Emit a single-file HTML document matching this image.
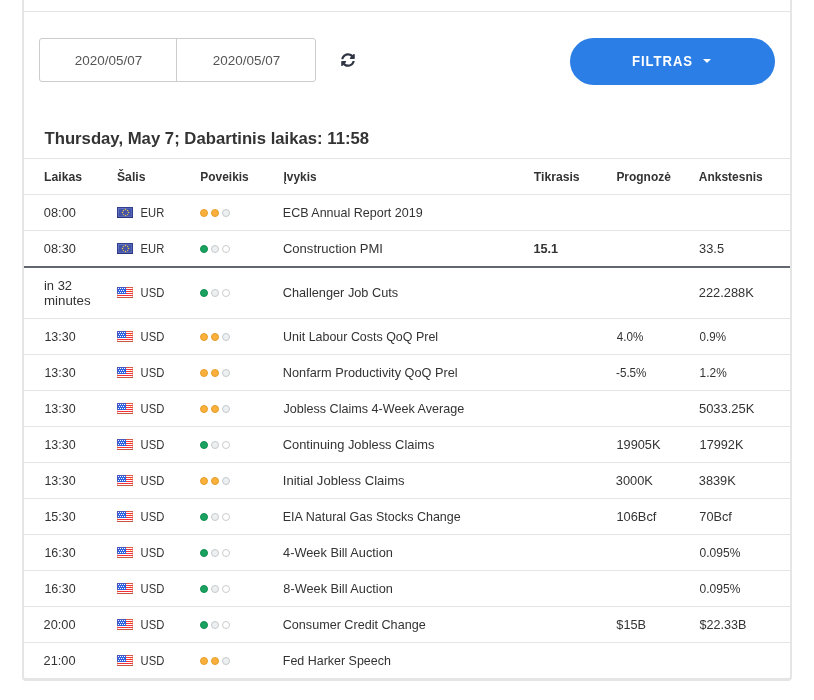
<!DOCTYPE html>
<html lang="lt">
<head>
<meta charset="utf-8">
<title>Ekonomikos kalendorius</title>
<style>
*{box-sizing:border-box;margin:0;padding:0}
html,body{width:814px;height:700px;overflow:hidden;background:#fff}
body{font-family:"Liberation Sans",sans-serif;font-size:13px;color:#333;position:relative}
#wrap{position:absolute;left:0;top:0;width:814px;height:700px;will-change:transform;opacity:.999}
.card{position:absolute;left:22px;top:-20px;width:770px;height:701px;border:2px solid #e5e5e5;border-bottom-width:3px;border-radius:0 0 4px 4px;background:#fff}
.topline{position:absolute;left:24px;top:11px;width:766px;height:1px;background:#e4e4e4}
.dates{position:absolute;left:39px;top:38px;width:277px;height:44px;border:1px solid #ccc;border-radius:3px;display:flex}
.dates div{flex:0 0 auto;height:42px;line-height:43px;text-align:center;font-size:13px;color:#555}
.dates em{font-style:normal;display:inline-block}
.dates .d1{width:137px;border-right:1px solid #ccc}
.dates .d2{width:138px}
.refresh{position:absolute;left:341px;top:53px;width:14px;height:14px}
.btn{position:absolute;left:570px;top:38px;width:205px;height:47px;border-radius:24px;background:#2a7ee6;color:#fff;font-weight:700;font-size:14px;letter-spacing:1px}
.btn span{transform-origin:0 50%;position:absolute;left:63px;top:15px;line-height:16px;white-space:nowrap}
.btn i{position:absolute;left:132.8px;top:21px;width:0;height:0;border-left:4.2px solid transparent;border-right:4.2px solid transparent;border-top:4.4px solid #fff}
h2{transform-origin:0 50%;position:absolute;left:44px;top:128px;font-size:17px;line-height:22px;font-weight:700;color:#333;white-space:nowrap}
.tbl{position:absolute;left:24px;top:158px;width:766px}
.r{position:relative;height:36px;border-top:1px solid #e4e4e4}
.r.now{height:52px;border-top:2px solid #63676e}
.r span{position:absolute;top:10px;line-height:15px;white-space:nowrap;transform-origin:0 50%}
.r.now .l1{top:10px}.r.now .l2{top:25px}
.r.h span{font-weight:700}
.c1{left:20px}.c2{left:93px}.c3{left:176px}.c4{left:259px}.c5{left:509px}.c6{left:592px}.c7{left:675px}
.r .cc{left:116px}
.r .fl{left:93px;top:12px;width:16px;height:11px;line-height:0}
.r.now .fl{top:19px}
.r.now .cc,.r.now .c4,.r.now .c7{top:17px}
.r .dots{left:176px;top:14px;height:8px;line-height:0;display:flex}
.r.now .dots{top:21px}
.dots b{display:block;width:8px;height:8px;border-radius:50%;margin-right:3px;border:1px solid #ccc;background:#fff}
.dots b.o{background:#fbb03b;border-color:#e39e2b}
.dots b.g{background:#1aa260;border-color:#128c50}
.dots b.e{background:#ecf0f1;border-color:#c6cacd}
.bold{font-weight:700}
</style>
</head>
<body>
<div id="wrap">
<div class="card"></div>
<div class="topline"></div>

<div class="dates"><div class="d1"><em style="transform:translateX(0.99px) scaleX(1.0356)">2020/05/07</em></div><div class="d2"><em style="transform:translateX(0.99px) scaleX(1.0356)">2020/05/07</em></div></div>
<svg class="refresh" viewBox="0 0 512 512"><path fill="#2f3542" d="M370.72 133.28C339.458 104.008 298.888 87.962 255.848 88c-77.458.068-144.328 53.178-162.791 126.85-1.344 5.363-6.122 9.15-11.651 9.15H24.103c-7.498 0-13.194-6.807-11.807-14.176C33.933 94.924 134.813 8 256 8c66.448 0 126.791 26.136 171.315 68.685L463.03 40.97C478.149 25.851 504 36.559 504 57.941V192c0 13.255-10.745 24-24 24H345.941c-21.382 0-32.09-25.851-16.971-40.971l41.75-41.749zM32 296h134.059c21.382 0 32.09 25.851 16.971 40.971l-41.75 41.75c31.262 29.273 71.835 45.319 114.876 45.28 77.418-.07 144.315-53.144 162.787-126.849 1.344-5.363 6.122-9.15 11.651-9.15h57.304c7.498 0 13.194 6.807 11.807 14.176C478.067 417.076 377.187 504 256 504c-66.448 0-126.791-26.136-171.315-68.685L48.97 471.03C33.851 486.149 8 475.441 8 454.059V320c0-13.255 10.745-24 24-24z"/></svg>
<div class="btn"><span style="transform:translateX(-0.92px) scaleX(0.9362)">FILTRAS</span><i></i></div>

<h2 style="transform:translateX(0.47px) scaleX(0.9827)">Thursday, May 7; Dabartinis laikas: 11:58</h2>

<svg width="0" height="0" style="position:absolute">
<defs>
<g id="eu" shape-rendering="crispEdges">
<rect width="16" height="11" fill="#323e8e"/>
<rect x="1" y="1" width="14" height="9" fill="#5567b8"/>
<rect x="1" y="1" width="7" height="1" fill="#6176c6"/><rect x="1" y="1" width="1" height="5" fill="#6176c6"/>
<rect x="2" y="2" width="12" height="7" fill="#4253a8"/>
<rect x="0" y="10" width="16" height="1" fill="#2a357e"/>
<g fill="#ecc94b" shape-rendering="auto">
<circle cx="8.5" cy="2.6" r=".75"/><circle cx="8.5" cy="8.5" r=".75"/>
<circle cx="5.5" cy="5.5" r=".75"/><circle cx="11.5" cy="5.5" r=".75"/>
<circle cx="6.4" cy="3.5" r=".65"/><circle cx="10.6" cy="3.5" r=".65"/>
<circle cx="6.4" cy="7.6" r=".65"/><circle cx="10.6" cy="7.6" r=".65"/>
</g>
</g>
<g id="us" shape-rendering="crispEdges">
<rect width="16" height="11" fill="#fff"/>
<rect x="9" y="0" width="7" height="1" fill="#d95a44"/>
<rect x="15" y="1" width="1" height="9" fill="#eeb3a6"/>
<g fill="#f5313c">
<rect x="9" y="2" width="6" height="1"/><rect x="9" y="4" width="6" height="1"/><rect x="9" y="6" width="6" height="1"/><rect x="1" y="8" width="14" height="1"/>
</g>
<g fill="#d8583f">
<rect x="15" y="2" width="1" height="1"/><rect x="15" y="4" width="1" height="1"/><rect x="15" y="6" width="1" height="1"/><rect x="15" y="8" width="1" height="1"/><rect x="0" y="8" width="1" height="1"/>
</g>
<rect x="0" y="7" width="1" height="1" fill="#f3c3b7"/><rect x="0" y="9" width="1" height="1" fill="#f3c3b7"/>
<rect x="0" y="10" width="16" height="1" fill="#c9543f"/>
<rect x="0" y="0" width="9" height="7" fill="#2d63e0"/>
<rect x="0" y="0" width="1" height="7" fill="#4b57ba"/><rect x="0" y="0" width="9" height="1" fill="#4b57ba"/>
<g fill="#fff">
<rect x="1" y="1" width="1" height="1"/><rect x="3" y="1" width="1" height="1"/><rect x="5" y="1" width="1" height="1"/><rect x="7" y="1" width="1" height="1"/>
<rect x="2" y="3" width="1" height="1"/><rect x="4" y="3" width="1" height="1"/><rect x="6" y="3" width="1" height="1"/>
<rect x="1" y="5" width="1" height="1"/><rect x="3" y="5" width="1" height="1"/><rect x="5" y="5" width="1" height="1"/><rect x="7" y="5" width="1" height="1"/>
</g>
<rect x="13" y="3" width="1" height="1" fill="#f6e04a"/>
</g>
</defs>
</svg>

<div class="tbl">
<div class="r h"><span class="c1" style="transform:translateX(0.01px) scaleX(0.9395)">Laikas</span><span class="c2" style="transform:translateX(-0.05px) scaleX(0.9397)">Šalis</span><span class="c3" style="transform:translateX(0.33px) scaleX(0.9171)">Poveikis</span><span class="c4" style="transform:translateX(0.52px) scaleX(0.9137)">Įvykis</span><span class="c5" style="transform:translateX(0.77px) scaleX(0.9381)">Tikrasis</span><span class="c6" style="transform:translateX(0.38px) scaleX(0.9186)">Prognozė</span><span class="c7" style="transform:translateX(-0.14px) scaleX(0.9205)">Ankstesnis</span></div>
<div class="r"><span class="c1" style="transform:translateX(-0.16px) scaleX(0.9846)">08:00</span><span class="fl"><svg width="16" height="11"><use href="#eu"/></svg></span><span class="cc" style="transform:translateX(0.59px) scaleX(0.8612)">EUR</span><span class="dots"><b class="o"></b><b class="o"></b><b class="e"></b></span><span class="c4" style="transform:translateX(-0.22px) scaleX(0.9628)">ECB Annual Report 2019</span></div>
<div class="r"><span class="c1" style="transform:translateX(-0.16px) scaleX(0.9846)">08:30</span><span class="fl"><svg width="16" height="11"><use href="#eu"/></svg></span><span class="cc" style="transform:translateX(0.59px) scaleX(0.8612)">EUR</span><span class="dots"><b class="g"></b><b class="e"></b><b></b></span><span class="c4" style="transform:translateX(-0.08px) scaleX(1.0036)">Construction PMI</span><span class="c5 bold" style="transform:translateX(0.41px) scaleX(0.9778)">15.1</span><span class="c7" style="transform:translateX(0.08px) scaleX(0.9867)">33.5</span></div>
<div class="r now"><span class="c1 l1" style="transform:translateX(-0.01px) scaleX(0.9942)">in 32</span><span class="c1 l2" style="transform:translateX(0.01px) scaleX(1.0234)">minutes</span><span class="fl"><svg width="16" height="11"><use href="#us"/></svg></span><span class="cc" style="transform:translateX(0.58px) scaleX(0.8631)">USD</span><span class="dots"><b class="g"></b><b class="e"></b><b></b></span><span class="c4" style="transform:translateX(-0.28px) scaleX(0.9803)">Challenger Job Cuts</span><span class="c7" style="transform:translateX(-0.26px) scaleX(0.9895)">222.288K</span></div>
<div class="r"><span class="c1" style="transform:translateX(0.42px) scaleX(0.9597)">13:30</span><span class="fl"><svg width="16" height="11"><use href="#us"/></svg></span><span class="cc" style="transform:translateX(0.58px) scaleX(0.8631)">USD</span><span class="dots"><b class="o"></b><b class="o"></b><b class="e"></b></span><span class="c4" style="transform:translateX(0.03px) scaleX(0.9580)">Unit Labour Costs QoQ Prel</span><span class="c6" style="transform:translateX(0.73px) scaleX(0.8967)">4.0%</span><span class="c7" style="transform:translateX(0.57px) scaleX(0.8920)">0.9%</span></div>
<div class="r"><span class="c1" style="transform:translateX(0.42px) scaleX(0.9597)">13:30</span><span class="fl"><svg width="16" height="11"><use href="#us"/></svg></span><span class="cc" style="transform:translateX(0.58px) scaleX(0.8631)">USD</span><span class="dots"><b class="o"></b><b class="o"></b><b class="e"></b></span><span class="c4" style="transform:translateX(-0.16px) scaleX(0.9796)">Nonfarm Productivity QoQ Prel</span><span class="c6" style="transform:translateX(0.01px) scaleX(0.8974)">-5.5%</span><span class="c7" style="transform:translateX(0.62px) scaleX(0.9148)">1.2%</span></div>
<div class="r"><span class="c1" style="transform:translateX(0.42px) scaleX(0.9597)">13:30</span><span class="fl"><svg width="16" height="11"><use href="#us"/></svg></span><span class="cc" style="transform:translateX(0.58px) scaleX(0.8631)">USD</span><span class="dots"><b class="o"></b><b class="o"></b><b class="e"></b></span><span class="c4" style="transform:translateX(0.38px) scaleX(0.9688)">Jobless Claims 4-Week Average</span><span class="c7" style="transform:translateX(-0.08px) scaleX(0.9968)">5033.25K</span></div>
<div class="r"><span class="c1" style="transform:translateX(0.42px) scaleX(0.9597)">13:30</span><span class="fl"><svg width="16" height="11"><use href="#us"/></svg></span><span class="cc" style="transform:translateX(0.58px) scaleX(0.8631)">USD</span><span class="dots"><b class="g"></b><b class="e"></b><b></b></span><span class="c4" style="transform:translateX(-0.28px) scaleX(0.9907)">Continuing Jobless Claims</span><span class="c6" style="transform:translateX(0.44px) scaleX(0.9812)">19905K</span><span class="c7" style="transform:translateX(0.56px) scaleX(0.9780)">17992K</span></div>
<div class="r"><span class="c1" style="transform:translateX(0.42px) scaleX(0.9597)">13:30</span><span class="fl"><svg width="16" height="11"><use href="#us"/></svg></span><span class="cc" style="transform:translateX(0.58px) scaleX(0.8631)">USD</span><span class="dots"><b class="o"></b><b class="o"></b><b class="e"></b></span><span class="c4" style="transform:translateX(-0.21px) scaleX(1.0035)">Initial Jobless Claims</span><span class="c6" style="transform:translateX(-0.21px) scaleX(0.9874)">3000K</span><span class="c7" style="transform:translateX(-0.19px) scaleX(0.9820)">3839K</span></div>
<div class="r"><span class="c1" style="transform:translateX(0.42px) scaleX(0.9597)">15:30</span><span class="fl"><svg width="16" height="11"><use href="#us"/></svg></span><span class="cc" style="transform:translateX(0.58px) scaleX(0.8631)">USD</span><span class="dots"><b class="g"></b><b class="e"></b><b></b></span><span class="c4" style="transform:translateX(-0.22px) scaleX(0.9620)">EIA Natural Gas Stocks Change</span><span class="c6" style="transform:translateX(0.43px) scaleX(0.9881)">106Bcf</span><span class="c7" style="transform:translateX(0.31px) scaleX(0.9781)">70Bcf</span></div>
<div class="r"><span class="c1" style="transform:translateX(0.42px) scaleX(0.9597)">16:30</span><span class="fl"><svg width="16" height="11"><use href="#us"/></svg></span><span class="cc" style="transform:translateX(0.58px) scaleX(0.8631)">USD</span><span class="dots"><b class="g"></b><b class="e"></b><b></b></span><span class="c4" style="transform:translateX(0.08px) scaleX(0.9825)">4-Week Bill Auction</span><span class="c7" style="transform:translateX(0.52px) scaleX(0.9257)">0.095%</span></div>
<div class="r"><span class="c1" style="transform:translateX(0.42px) scaleX(0.9597)">16:30</span><span class="fl"><svg width="16" height="11"><use href="#us"/></svg></span><span class="cc" style="transform:translateX(0.58px) scaleX(0.8631)">USD</span><span class="dots"><b class="g"></b><b class="e"></b><b></b></span><span class="c4" style="transform:translateX(0.37px) scaleX(0.9794)">8-Week Bill Auction</span><span class="c7" style="transform:translateX(0.52px) scaleX(0.9257)">0.095%</span></div>
<div class="r"><span class="c1" style="transform:translateX(-0.45px) scaleX(0.9821)">20:00</span><span class="fl"><svg width="16" height="11"><use href="#us"/></svg></span><span class="cc" style="transform:translateX(0.58px) scaleX(0.8631)">USD</span><span class="dots"><b class="g"></b><b class="e"></b><b></b></span><span class="c4" style="transform:translateX(-0.29px) scaleX(0.9699)">Consumer Credit Change</span><span class="c6" style="transform:translateX(0.31px) scaleX(0.9807)">$15B</span><span class="c7" style="transform:translateX(0.43px) scaleX(0.9676)">$22.33B</span></div>
<div class="r"><span class="c1" style="transform:translateX(-0.45px) scaleX(0.9821)">21:00</span><span class="fl"><svg width="16" height="11"><use href="#us"/></svg></span><span class="cc" style="transform:translateX(0.58px) scaleX(0.8631)">USD</span><span class="dots"><b class="o"></b><b class="o"></b><b class="e"></b></span><span class="c4" style="transform:translateX(-0.16px) scaleX(0.9580)">Fed Harker Speech</span></div>
</div>
</div>
</body>
</html>
